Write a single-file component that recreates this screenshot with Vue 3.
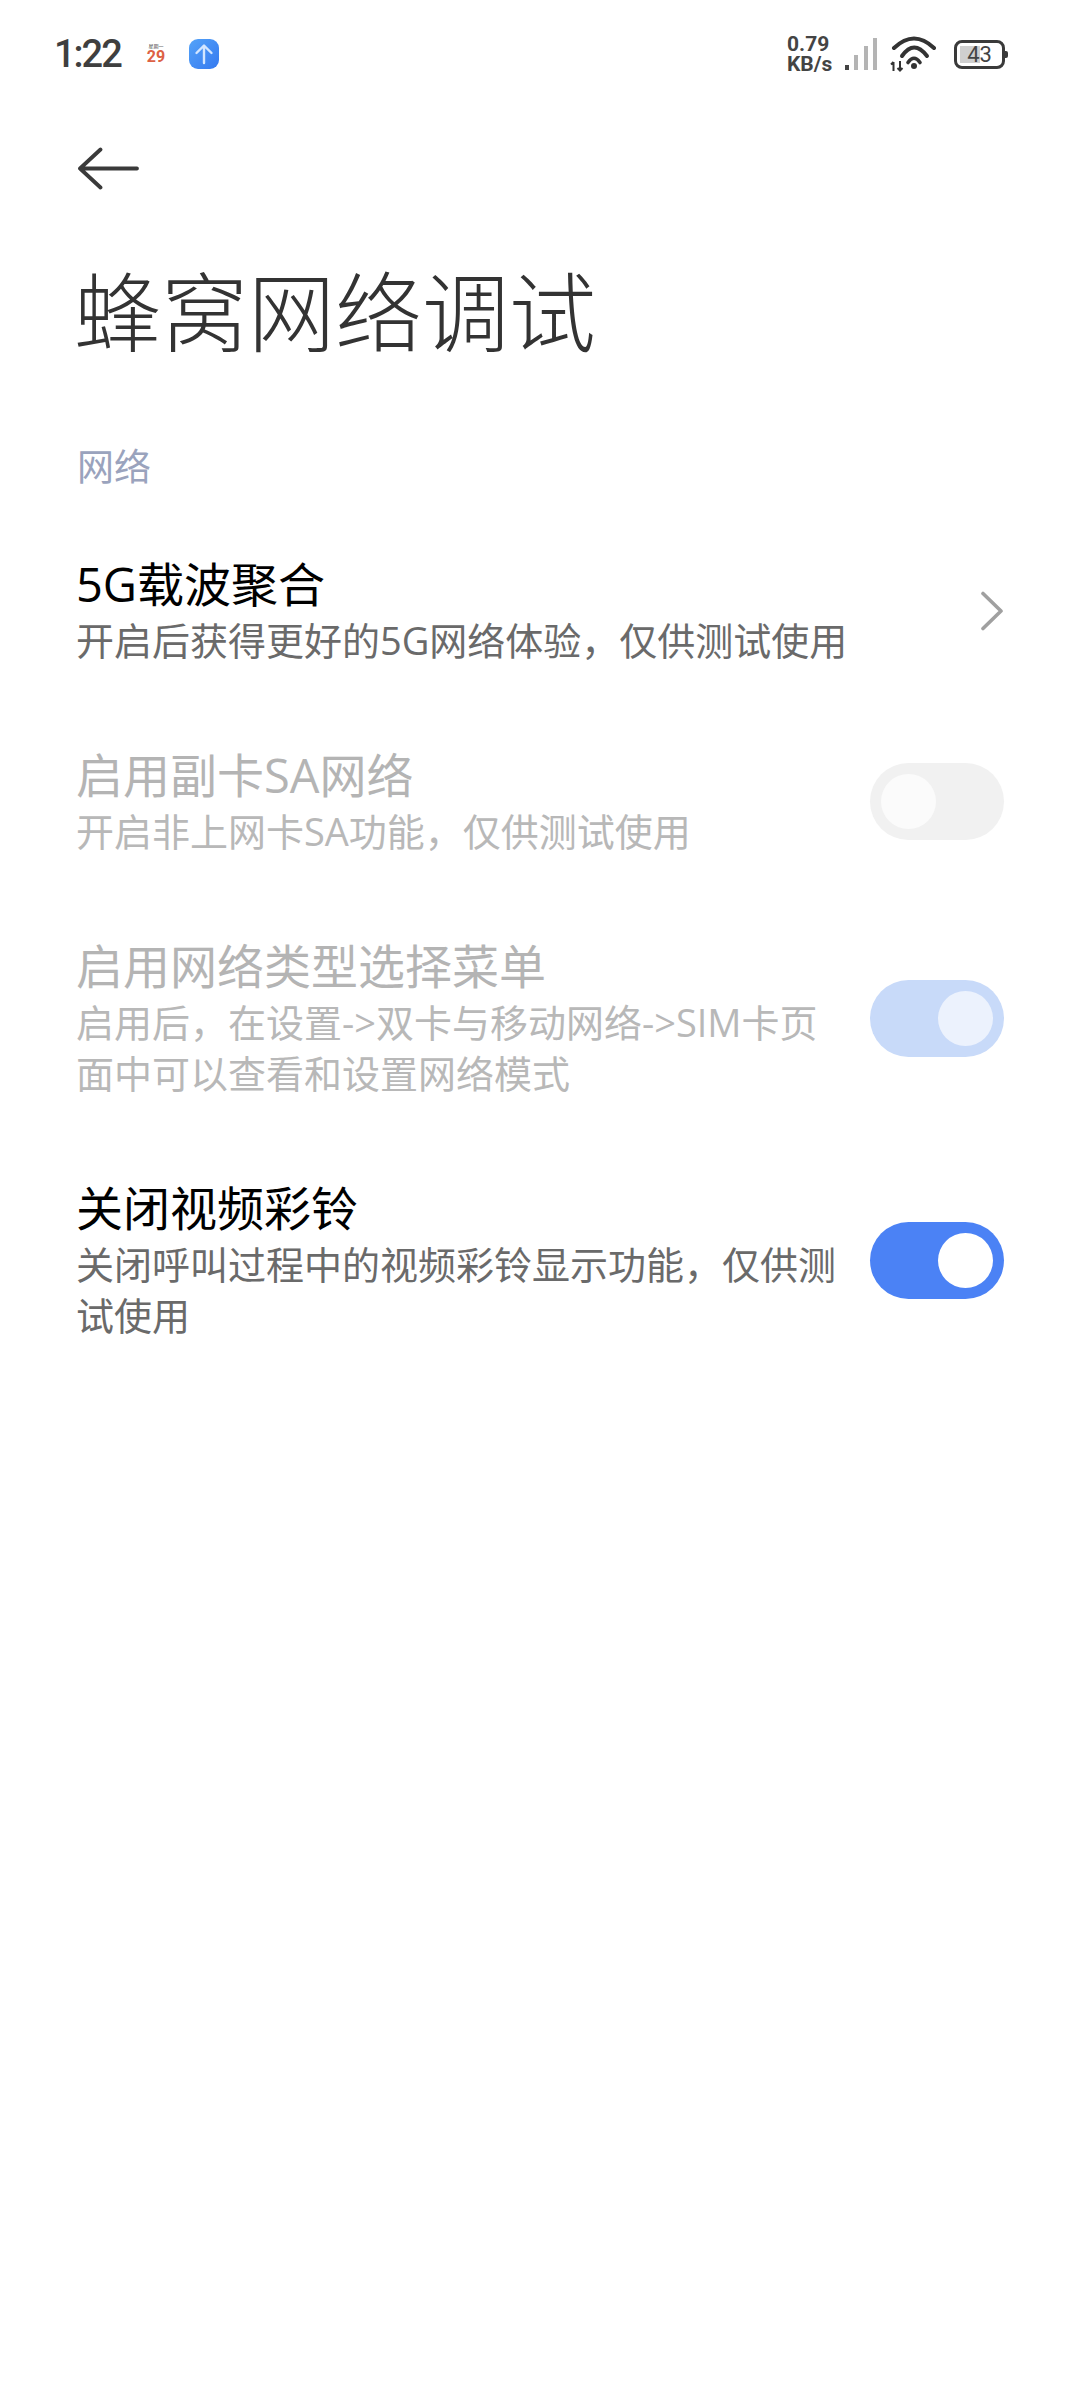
<template>
  <div class="page">
    <!-- Status bar -->
    <div class="status-bar">
      <div class="status-left">
        <span class="time">1:22</span>
        <div class="cal">
          <span class="cal-week">星期一</span>
          <span class="cal-day">29</span>
        </div>
        <div class="upload-app">
          <svg width="30" height="30" viewBox="0 0 30 30">
            <path d="M15 24V7M7.500 14L15 6.500L22.500 14" fill="none" stroke="#d3e6ff" stroke-width="2.400" stroke-linecap="round" stroke-linejoin="round" />
          </svg>
        </div>
      </div>
      <div class="status-right">
        <div class="speed">
          <span>0.79</span>
          <span>KB/s</span>
        </div>
        <svg class="signal" width="33" height="33" viewBox="0 0 33 33">
          <rect x="0" y="27" width="4" height="5" fill="#444" />
          <rect x="9" y="17" width="4" height="15" fill="#b4b4b4" />
          <rect x="19" y="8" width="4" height="24" fill="#b4b4b4" />
          <rect x="28" y="0" width="4" height="32" fill="#b4b4b4" />
        </svg>
        <svg class="wifi" width="48" height="36" viewBox="0 0 48 36">
          <path d="M4 12Q24 -7 44 12" fill="none" stroke="#333" stroke-width="4" stroke-linecap="round" />
          <path d="M12 20Q24 3 37 20" fill="none" stroke="#333" stroke-width="4" stroke-linecap="round" />
          <path d="M18 26.500Q24 18 30 26.500" fill="none" stroke="#333" stroke-width="3.600" stroke-linecap="round" />
          <circle cx="24" cy="30" r="3" fill="#333" />
          <path d="M3.500 35V26M1 28.500L3.500 26M10 25V34.500M7.500 32L10 34.500L12.500 32" fill="none" stroke="#333" stroke-width="2" />
        </svg>
        <div class="battery">
          <div class="battery-fill"></div>
          <span class="battery-num">43</span>
        </div>
      </div>
    </div>

    <!-- Header -->
    <div class="back">
      <svg width="64" height="44" viewBox="0 0 64 44">
        <path d="M3 22.500H60M23.500 3.500L3 22.500L23.500 41.500" fill="none" stroke="#3a3a3a" stroke-width="3.800" stroke-linecap="round" stroke-linejoin="round" />
      </svg>
    </div>
    <h1 class="page-title">蜂窝网络调试</h1>
    <div class="section-title">网络</div>

    <!-- List -->
    <div class="list">
      <div v-for="item in items" :key="item.title" :class="['row', { disabled: item.disabled }]">
        <div class="row-text">
          <div class="row-title">{{ item.title }}</div>
          <div class="row-sub">{{ item.sub }}</div>
        </div>
        <svg v-if="item.type === 'link'" class="chevron" width="24" height="40" viewBox="0 0 24 40">
          <path d="M3 2.500L21 20L3 37.500" fill="none" stroke="#a0a0a0" stroke-width="3.600" stroke-linecap="round" stroke-linejoin="round" />
        </svg>
        <div v-else :class="['toggle', { on: item.on }]">
          <div class="thumb"></div>
        </div>
      </div>
    </div>
  </div>
</template>

<script setup>
const items = [
  { title: '5G载波聚合', sub: '开启后获得更好的5G网络体验，仅供测试使用', type: 'link' },
  { title: '启用副卡SA网络', sub: '开启非上网卡SA功能，仅供测试使用', type: 'toggle', disabled: true, on: false },
  { title: '启用网络类型选择菜单', sub: '启用后，在设置->双卡与移动网络->SIM卡页面中可以查看和设置网络模式', type: 'toggle', disabled: true, on: true },
  { title: '关闭视频彩铃', sub: '关闭呼叫过程中的视频彩铃显示功能，仅供测试使用', type: 'toggle', on: true },
];
</script>

<style>
html, body {
  margin: 0;
  background: #ffffff;
}
</style>

<style scoped>
.page {
  width: 1080px;
  height: 2400px;
  background: #ffffff;
  font-family: "Open Sans", "Noto Sans CJK SC", sans-serif;
  overflow: hidden;
}

.status-bar {
  height: 108px;
  padding: 0 75px 0 54px;
  box-sizing: border-box;
  display: flex;
  justify-content: space-between;
  align-items: center;
}

.status-left,
.status-right {
  display: flex;
  align-items: center;
}

.time {
  font-family: Roboto, sans-serif;
  font-size: 38px;
  font-weight: 500;
  letter-spacing: -2px;
  color: #3f3f3f;
  width: 93px;
}

.cal {
  width: 18px;
  display: flex;
  flex-direction: column;
  align-items: center;
  line-height: 1;
  white-space: nowrap;
  font-family: "Noto Sans CJK SC", sans-serif;
}

.cal-week {
  font-size: 5px;
  color: #444;
  height: 6px;
}

.cal-day {
  font-family: Roboto, sans-serif;
  font-size: 16px;
  font-weight: 700;
  color: #dd6145;
}

.upload-app {
  width: 30px;
  height: 30px;
  margin-left: 24px;
  border-radius: 9px;
  background: linear-gradient(135deg, #54a3f8, #3579f0);
}

.upload-app svg {
  display: block;
}

.speed {
  display: flex;
  flex-direction: column;
  align-items: flex-start;
  font-family: Roboto, sans-serif;
  font-weight: 700;
  font-size: 21px;
  line-height: 20px;
  color: #444;
  width: 46px;
}

.signal {
  margin-left: 12px;
}

.wifi {
  margin-left: 12px;
}

.battery {
  position: relative;
  width: 51px;
  height: 29px;
  margin-left: 16px;
  border: 3px solid #3a3a3a;
  border-radius: 8px;
  box-sizing: border-box;
}

.battery::after {
  content: "";
  position: absolute;
  right: -6px;
  top: 8px;
  width: 3px;
  height: 7px;
  background: #3a3a3a;
  border-radius: 0 2px 2px 0;
}

.battery-fill {
  position: absolute;
  left: 3px;
  top: 3px;
  bottom: 3px;
  width: 20px;
  background: #cfcfcf;
}

.battery-num {
  position: absolute;
  left: 0;
  right: 0;
  top: 0;
  bottom: 0;
  text-align: center;
  font-family: Roboto, sans-serif;
  font-size: 22px;
  line-height: 23px;
  color: #444;
}

.back {
  padding: 38px 0 0 77px;
  height: 44px;
}

.back svg {
  display: block;
}

.page-title {
  margin: 68px 0 0 74px;
  font-family: "Noto Sans CJK SC", sans-serif;
  font-size: 87px;
  font-weight: 300;
  line-height: 100px;
  color: #333333;
}

.section-title {
  margin: 82px 0 0 77px;
  font-family: "Noto Sans CJK SC", sans-serif;
  font-size: 37px;
  line-height: 50px;
  color: #9aa3bd;
}

.list {
  margin-top: 24px;
}

.row {
  display: flex;
  align-items: center;
  justify-content: space-between;
  padding: 41px 76px 39px 76px;
}

.row-text {
  width: 775px;
}

.row-title {
  font-size: 47px;
  line-height: 58px;
  color: #000000;
}

.row-sub {
  margin-top: 2px;
  font-size: 38px;
  line-height: 51px;
  color: #6a6a6a;
}

.row.disabled .row-title {
  color: #b4b4b4;
}

.row.disabled .row-sub {
  color: #b8b8b8;
}

.toggle {
  width: 134px;
  height: 77px;
  border-radius: 39px;
  background: #f1f1f1;
  padding: 11px;
  box-sizing: border-box;
  display: flex;
}

.thumb {
  width: 55px;
  height: 55px;
  border-radius: 50%;
  background: #fbfbfb;
}

.toggle.on {
  background: #4b82f5;
  justify-content: flex-end;
}

.toggle.on .thumb {
  background: #ffffff;
}

.row.disabled .toggle.on {
  background: #c8daf9;
}

.row.disabled .toggle.on .thumb {
  background: #ecf2fd;
}
</style>
